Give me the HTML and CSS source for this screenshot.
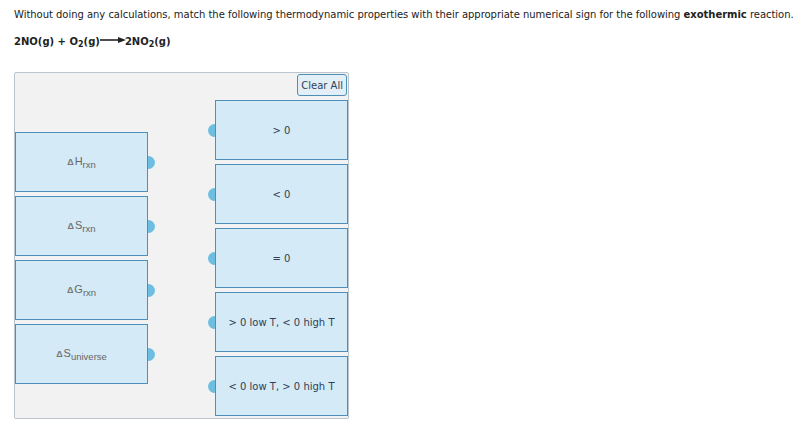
FILE: index.html
```html
<!DOCTYPE html>
<html lang="en">
<head>
  <meta charset="UTF-8">
  <title>Match thermodynamic properties</title>
  <link rel="stylesheet" href="styles.css">
</head>
<body>
  <p class="prompt">Without doing any calculations, match the following thermodynamic properties with their appropriate numerical sign for the following <b>exothermic</b> reaction.</p>
  <p class="equation">2NO(g) + O<sub>2</sub>(g)<svg class="arrow" width="26" height="8" viewBox="0 0 26 8"><line x1="0" y1="4" x2="20" y2="4" stroke="#222" stroke-width="1.6"/><polygon points="18,1 26,4 18,7" fill="#222"/></svg>2NO<sub>2</sub>(g)</p>

  <div class="matcher">
    <div class="col col-left">
      <div class="item handle-right"><span class="label"><span class="delta">&#916;</span>H<sub>rxn</sub></span></div>
      <div class="item handle-right"><span class="label"><span class="delta">&#916;</span>S<sub>rxn</sub></span></div>
      <div class="item handle-right"><span class="label"><span class="delta">&#916;</span>G<sub>rxn</sub></span></div>
      <div class="item handle-right"><span class="label"><span class="delta">&#916;</span>S<sub>universe</sub></span></div>
    </div>
    <div class="col col-right">
      <button class="clear-btn">Clear All</button>
      <div class="target handle-left">&gt; 0</div>
      <div class="target handle-left">&lt; 0</div>
      <div class="target handle-left">= 0</div>
      <div class="target handle-left">&gt; 0 low T, &lt; 0 high T</div>
      <div class="target handle-left">&lt; 0 low T, &gt; 0 high T</div>
    </div>
  </div>
</body>
</html>
```

FILE: styles.css
```css
body {
  margin: 0;
  padding: 0 14px;
  font-family: "DejaVu Sans", Verdana, sans-serif;
  font-size: 10px;
  color: #222;
  background: #fff;
}
.prompt {
  margin: 8px 0 0;
  line-height: 13px;
  white-space: nowrap;
  letter-spacing: -0.03px;
}
.equation {
  margin: 14px 0 0;
  font-weight: bold;
  line-height: 14px;
}
.equation sub {
  font-size: 8px;
  line-height: 0;
  vertical-align: -2px;
}
.equation .arrow {
  vertical-align: 1px;
  margin: 0 -1px 0 0;
}

/* matching board */
.matcher {
  margin-top: 23px;
  width: 333px;
  height: 345px;
  border: 1px solid #bcc5ce;
  border-radius: 2px;
  background: #f2f2f2;
  display: flex;
  justify-content: space-between;
  box-shadow: 0 1px 1px rgba(0, 0, 0, 0.08);
}
.col {
  position: relative;
  z-index: 0;
  display: flex;
  flex-direction: column;
  gap: 4px;
  width: 133px;
}
.col-left {
  padding-top: 59px;
}
.col-right {
  padding-top: 1px;
  align-items: flex-end;
}
.clear-btn {
  font-family: "DejaVu Sans", Verdana, sans-serif;
  font-size: 10px;
  color: #2f3f55;
  background: #e2eff8;
  border: 1px solid #4f8fb5;
  border-radius: 3px;
  height: 22px;
  padding: 0 3px;
  margin-right: 1px;
  cursor: pointer;
}
.item,
.target {
  position: relative;
  box-sizing: border-box;
  width: 133px;
  height: 60px;
  background: #d4eaf7;
  border: 1px solid #4d91ba;
  display: flex;
  align-items: center;
  justify-content: center;
}
.target {
  color: #2f3f55;
}
.label {
  font-family: "Liberation Sans", Arial, sans-serif;
  font-size: 11px;
  color: #666;
  margin-top: -2px;
}
.delta {
  font-size: 9px;
  font-weight: bold;
  color: #777;
  margin-right: 1px;
}
.label sub {
  font-size: 9.5px;
  line-height: 0;
  vertical-align: -3px;
}

/* connector dots */
.handle-right::after,
.handle-left::before {
  content: '';
  position: absolute;
  top: 50%;
  width: 13px;
  height: 13px;
  margin-top: -6px;
  border-radius: 50%;
  background: #6dbfe2;
  z-index: -1;
}
.handle-right::after {
  right: -8px;
}
.handle-left::before {
  left: -8px;
}
```
